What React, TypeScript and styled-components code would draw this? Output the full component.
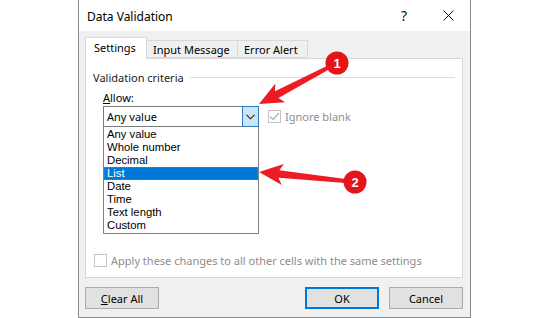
import styled, { createGlobalStyle } from "styled-components";

const GlobalStyle = createGlobalStyle`
  html, body {
    margin: 0;
    padding: 0;
    background: #ffffff;
  }
  body {
    font-family: "Noto Sans", "Liberation Sans", sans-serif;
    font-size: 11px;
    color: #000;
  }
`;

const Page = styled.div`
  position: relative;
  width: 549px;
  height: 318px;
  overflow: hidden;
  background: #ffffff;
`;

const Dialog = styled.div`
  box-sizing: border-box;
  margin-left: 78px;
  width: 393px;
  height: 318px;
  border: 1px solid #8a8a8a;
  border-top: none;
  background: #f0f0f0;
  display: flex;
  flex-direction: column;
`;

const TitleBar = styled.div`
  height: 31px;
  background: #ffffff;
  display: flex;
  align-items: center;
  padding-left: 8px;
`;

const Title = styled.div`
  flex: 1;
  font-size: 12px;
  margin-top: 1px;
`;

const TitleButton = styled.div`
  width: 44px;
  height: 31px;
  display: flex;
  align-items: center;
  justify-content: center;
  font-size: 14px;
  color: #111;
`;

const Body = styled.div`
  padding: 6px 7px 0 6px;
  display: flex;
  flex-direction: column;
`;

const TabStrip = styled.div`
  display: flex;
  align-items: flex-end;
  height: 21px;
  position: relative;
  z-index: 1;
`;

const Tab = styled.div<{ $active?: boolean; $w: number }>`
  box-sizing: border-box;
  width: ${(p) => p.$w}px;
  height: ${(p) => (p.$active ? 22 : 18)}px;
  margin-bottom: ${(p) => (p.$active ? -1 : 0)}px;
  margin-left: ${(p) => (p.$active ? 0 : -1)}px;
  border: 1px solid #d9d9d9;
  border-bottom: ${(p) => (p.$active ? "none" : "1px solid #d9d9d9")};
  background: ${(p) => (p.$active ? "#ffffff" : "#f0f0f0")};
  display: flex;
  align-items: center;
  padding-left: ${(p) => (p.$active ? 8 : 6)}px;
  padding-bottom: ${(p) => (p.$active ? 2 : 0)}px;
  font-size: 11px;
  white-space: nowrap;
`;

const Pane = styled.div`
  box-sizing: border-box;
  height: 220px;
  background: #ffffff;
  border: 1px solid #d9d9d9;
  padding: 8px 7px 0 7px;
  display: flex;
  flex-direction: column;
`;

const GroupHeader = styled.div`
  display: flex;
  align-items: center;
  gap: 6px;
  height: 20px;
  font-size: 11px;
  color: #1a1a1a;
`;

const GroupLine = styled.div`
  flex: 1;
  height: 1px;
  background: #dcdcdc;
`;

const Indent = styled.div`
  padding-left: 10px;
  display: flex;
  flex-direction: column;
`;

const FieldLabel = styled.div`
  margin-top: 2px;
  height: 17px;
  line-height: 17px;
  font-size: 11px;
`;

const Row = styled.div`
  display: flex;
  align-items: flex-start;
`;

const ComboColumn = styled.div`
  display: flex;
  flex-direction: column;
  width: 156px;
`;

const Combo = styled.div`
  box-sizing: border-box;
  height: 21px;
  border: 1px solid #7a7a7a;
  border-right: none;
  display: flex;
  align-items: stretch;
  background: #fff;
`;

const ComboText = styled.div`
  flex: 1;
  padding-left: 3px;
  display: flex;
  align-items: center;
  font-size: 11px;
`;

const ComboButton = styled.div`
  box-sizing: border-box;
  width: 17px;
  margin-top: -1px;
  margin-bottom: -1px;
  background: #cce4f7;
  border: 1px solid #2f79bd;
  display: flex;
  align-items: center;
  justify-content: center;
`;

const List = styled.div`
  box-sizing: border-box;
  border: 1px solid #828282;
  border-top: none;
  padding: 1px 0 1px 0;
  background: #fff;
`;

const ListItem = styled.div<{ $selected?: boolean }>`
  height: 13px;
  line-height: 13px;
  padding-left: 3px;
  font-family: "Liberation Sans", Arial, sans-serif;
  font-size: 11.3px;
  background: ${(p) => (p.$selected ? "#0078d7" : "transparent")};
  color: ${(p) => (p.$selected ? "#ffffff" : "#000")};
  outline: ${(p) => (p.$selected ? "1px dotted #7a7a7a" : "none")};
  outline-offset: -1px;
`;

const CheckRow = styled.div<{ $ml: number; $mt: number; $mb?: number }>`
  display: flex;
  align-items: center;
  gap: 4px;
  margin-left: ${(p) => p.$ml}px;
  margin-top: ${(p) => p.$mt}px;
  margin-bottom: ${(p) => p.$mb ?? 0}px;
  color: #8d8d8d;
  font-size: 11px;
`;

const CheckBox = styled.div`
  box-sizing: border-box;
  width: 13px;
  height: 13px;
  border: 1px solid #c4c4c4;
  background: #fff;
  display: flex;
  align-items: center;
  justify-content: center;
`;

const Spacer = styled.div`
  flex: 1;
`;

const ButtonRow = styled.div`
  display: flex;
  align-items: center;
  gap: 10px;
  margin-top: 9px;
`;

const Button = styled.div<{ $primary?: boolean }>`
  box-sizing: border-box;
  width: 74px;
  height: 22px;
  background: #e1e1e1;
  border: ${(p) => (p.$primary ? "2px solid #0078d7" : "1px solid #adadad")};
  display: flex;
  align-items: center;
  justify-content: center;
  font-size: 11px;
`;

const Overlay = styled.svg`
  position: absolute;
  left: 0;
  top: 0;
  pointer-events: none;
`;

const Key = styled.span`
  text-decoration: underline;
`;

const Arrow = ({ x, y, tx, ty }: { x: number; y: number; tx: number; ty: number }) => {
  const dx = tx - x;
  const dy = ty - y;
  const len = Math.sqrt(dx * dx + dy * dy);
  const ang = (Math.atan2(dy, dx) * 180) / Math.PI;
  const pts = [
    [0, 0],
    [24, -10.5],
    [20, -3.8],
    [len, -1.8],
    [len, 1.8],
    [20, 3.8],
    [24, 10.5],
  ]
    .map((p) => p.join(","))
    .join(" ");
  return <polygon points={pts} fill="#ec1c24" transform={`translate(${x} ${y}) rotate(${ang})`} />;
};

const Badge = ({ cx, cy, n }: { cx: number; cy: number; n: string }) => (
  <g>
    <circle cx={cx} cy={cy} r={11.5} fill="#e4141b" />
    <text
      x={cx}
      y={cy + 4.5}
      textAnchor="middle"
      fill="#ffffff"
      fontFamily="'Liberation Sans', Arial, sans-serif"
      fontWeight="bold"
      fontSize="13"
    >
      {n}
    </text>
  </g>
);

const items = ["Any value", "Whole number", "Decimal", "List", "Date", "Time", "Text length", "Custom"];

export default function App() {
  return (
    <Page>
      <GlobalStyle />
      <Dialog>
        <TitleBar>
          <Title>Data Validation</Title>
          <TitleButton>?</TitleButton>
          <TitleButton>
            <svg width="11" height="11" viewBox="0 0 11 11">
              <path d="M0.5 0.5L10.5 10.5M10.5 0.5L0.5 10.5" stroke="#111" strokeWidth="1" />
            </svg>
          </TitleButton>
        </TitleBar>
        <Body>
          <TabStrip>
            <Tab $active $w={62}>Settings</Tab>
            <Tab $w={92}>Input Message</Tab>
            <Tab $w={71}>Error Alert</Tab>
          </TabStrip>
          <Pane>
            <GroupHeader>
              <span>Validation criteria</span>
              <GroupLine />
            </GroupHeader>
            <Indent>
              <FieldLabel>
                <Key>A</Key>llow:
              </FieldLabel>
              <Row>
                <ComboColumn>
                  <Combo>
                    <ComboText>Any value</ComboText>
                    <ComboButton>
                      <svg width="9" height="6" viewBox="0 0 9 6">
                        <path d="M0.5 0.8L4.5 4.8L8.5 0.8" fill="none" stroke="#222" strokeWidth="1.1" />
                      </svg>
                    </ComboButton>
                  </Combo>
                  <List>
                    {items.map((it) => (
                      <ListItem key={it} $selected={it === "List"}>
                        {it}
                      </ListItem>
                    ))}
                  </List>
                </ComboColumn>
                <CheckRow $ml={9} $mt={3}>
                  <CheckBox>
                    <svg width="11" height="9" viewBox="0 0 11 9">
                      <path d="M1 4.5L4 7.5L10 1" fill="none" stroke="#b5b5b5" strokeWidth="1.3" />
                    </svg>
                  </CheckBox>
                  <span>Ignore blank</span>
                </CheckRow>
              </Row>
            </Indent>
            <Spacer />
            <CheckRow $ml={1} $mt={0} $mb={9}>
              <CheckBox />
              <span>Apply these changes to all other cells with the same settings</span>
            </CheckRow>
          </Pane>
          <ButtonRow>
            <Button>
              <span>
                <Key>C</Key>lear All
              </span>
            </Button>
            <Spacer />
            <Button $primary>OK</Button>
            <Button>Cancel</Button>
          </ButtonRow>
        </Body>
      </Dialog>
      <Overlay width="549" height="318" viewBox="0 0 549 318">
        <Arrow x={259} y={104} tx={337} ty={63} />
        <Arrow x={259} y={172} tx={355} ty={182} />
        <Badge cx={337} cy={63} n="1" />
        <Badge cx={355} cy={182} n="2" />
      </Overlay>
    </Page>
  );
}
